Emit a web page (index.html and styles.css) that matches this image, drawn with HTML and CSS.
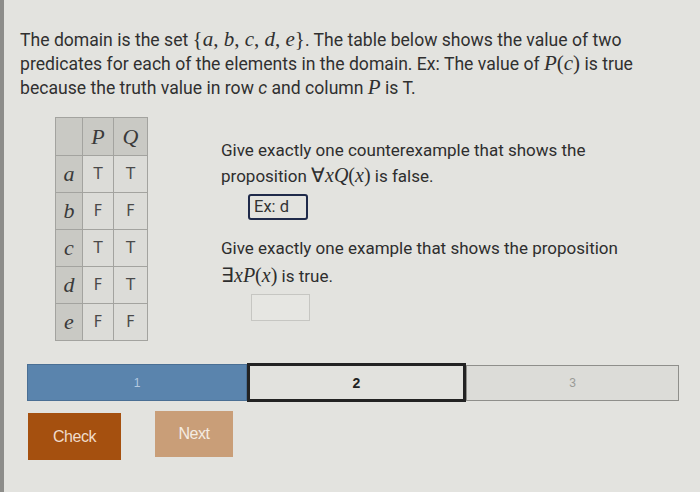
FILE: index.html
```html
<!DOCTYPE html>
<html>
<head>
<meta charset="utf-8">
<link rel="stylesheet" href="styles.css">
</head>
<body>
<div class="page">
  <p class="intro">The domain is the set <span class="m"><span class="up">{</span><i>a</i>, <i>b</i>, <i>c</i>, <i>d</i>, <i>e</i><span class="up">}</span></span>. The table below shows the value of two predicates for each of the elements in the domain. Ex: The value of <span class="m"><i>P</i><span class="up">(</span><i>c</i><span class="up">)</span></span> is true because the truth value in row <i class="mi">c</i> and column <span class="m"><i>P</i></span> is T.</p>

  <div class="content">
    <table class="truth">
      <tr class="head"><th></th><th><i>P</i></th><th><i>Q</i></th></tr>
      <tr><th><i>a</i></th><td>T</td><td>T</td></tr>
      <tr><th><i>b</i></th><td>F</td><td>F</td></tr>
      <tr><th><i>c</i></th><td>T</td><td>T</td></tr>
      <tr><th><i>d</i></th><td>F</td><td>T</td></tr>
      <tr><th><i>e</i></th><td>F</td><td>F</td></tr>
    </table>

    <div class="questions">
      <div class="q q1">
        <p>Give exactly one counterexample that shows the proposition <span class="m"><span class="up">∀</span><i>x</i><i>Q</i><span class="up">(</span><i>x</i><span class="up">)</span></span> is false.</p>
        <div class="answer filled">Ex: d</div>
      </div>
      <div class="q q2">
        <p>Give exactly one example that shows the proposition <span class="m"><span class="up">∃</span><i>x</i><i>P</i><span class="up">(</span><i>x</i><span class="up">)</span></span> is true.</p>
        <div class="answer empty"></div>
      </div>
    </div>
  </div>

  <div class="progress">
    <div class="seg done">1</div>
    <div class="seg current">2</div>
    <div class="seg todo">3</div>
  </div>

  <div class="buttons">
    <div class="btn check">Check</div>
    <div class="btn next">Next</div>
  </div>
</div>
</body>
</html>
```

FILE: styles.css
```css
html, body {
  margin: 0;
  padding: 0;
}
body {
  background: #e3e3df;
  width: 700px;
  height: 492px;
  overflow: hidden;
  font-family: Roboto, "Liberation Sans", sans-serif;
  color: #333;
}
.page {
  border-left: 4px solid #8d8d8a;
  height: 492px;
  box-sizing: border-box;
  padding: 28px 0 0 16px;
}
.intro {
  margin: 0;
  width: 650px;
  font-size: 17.6px;
  line-height: 24px;
  color: #303030;
}
.m {
  font-family: "Liberation Serif", serif;
  font-size: 21px;
  line-height: 1;
}
.m i { font-style: italic; }
.up { font-style: normal; }
.mi { font-style: italic; }

.content {
  display: flex;
  margin-top: 17px;
}
.truth {
  margin-left: 35px;
  border-collapse: collapse;
  border: 1px solid #999995;
  align-self: flex-start;
}
.truth th, .truth td {
  border: 1px solid #a3a39f;
  padding: 0;
  height: 36px;
  text-align: center;
  color: #444;
}
.truth th {
  background: #c9c9c4;
  font-family: "Liberation Serif", serif;
  font-size: 22px;
  font-weight: normal;
  color: #3a3a3a;
}
.truth th:first-child { width: 26px; }
.truth tr :nth-child(2) { width: 30px; }
.truth tr :nth-child(3) { width: 33px; }
.truth td {
  background: #dcdcd8;
  font-family: "DejaVu Sans", sans-serif;
  font-size: 15px;
  color: #4a4a4a;
}
.truth .head th { height: 37px; }

.questions {
  margin-left: 73px;
  display: flex;
  flex-direction: column;
}
.q p {
  margin: 0;
  font-size: 17px;
  line-height: 26px;
  color: #2e2e2e;
  width: 440px;
}
.q .m { font-size: 20px; }
.q1 { margin-top: 20px; }
.q2 { margin-top: 14px; }
.q2 p { line-height: 28px; }
.answer {
  box-sizing: border-box;
  margin-top: 5px;
  height: 26px;
  font-size: 16.5px;
  color: #333;
}
.answer.filled {
  margin-left: 27px;
  width: 60px;
  border: 2px solid #1f2a4a;
  border-radius: 3px;
  padding: 1px 0 0 4px;
  line-height: 20px;
}
.answer.empty {
  margin-left: 30px;
  margin-top: 4px;
  width: 59px;
  height: 27px;
  border: 1px solid #c6c6c2;
  background: #e6e6e2;
}

.progress {
  display: flex;
  align-items: center;
  margin-top: 22px;
  margin-left: 7px;
  width: 653px;
}
.seg {
  box-sizing: border-box;
  display: flex;
  align-items: center;
  justify-content: center;
  font-family: "Liberation Sans", sans-serif;
  font-size: 12px;
}
.seg.done {
  width: 220px;
  height: 37px;
  background: #5a84ad;
  border: 1px solid #4a6f94;
  color: #b3c9e0;
}
.seg.current {
  width: 219px;
  height: 39px;
  border: 3px solid #232323;
  background: #e2e2de;
  color: #222;
  font-weight: bold;
  font-size: 14px;
}
.seg.todo {
  width: 213px;
  height: 36px;
  border: 1px solid #8f8f8b;
  background: #dcdcd8;
  color: #9a9a96;
}

.buttons {
  display: flex;
  align-items: flex-start;
  margin-top: 11px;
  margin-left: 8px;
  gap: 34px;
}
.btn {
  display: flex;
  align-items: center;
  justify-content: center;
  font-family: "Liberation Sans", sans-serif;
  font-size: 16px;
  letter-spacing: -0.5px;
}
.btn.check {
  width: 93px;
  height: 47px;
  background: #a5500f;
  color: #f0dccb;
}
.btn.next {
  width: 78px;
  height: 46px;
  background: #c99e78;
  color: #f5ece2;
  margin-top: -2px;
}
```
